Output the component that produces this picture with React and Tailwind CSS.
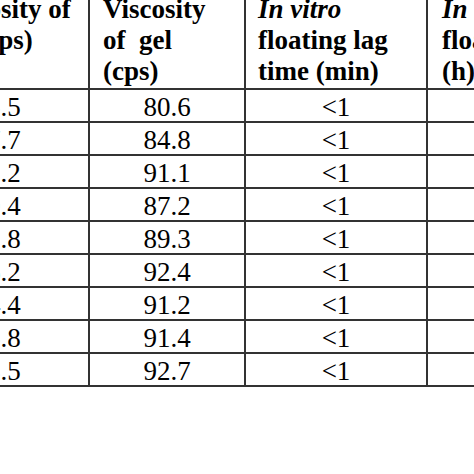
import React from "react";

const ROWS = [
  ["45.5", "80.6", "<1", "> 12"],
  ["47.7", "84.8", "<1", "> 12"],
  ["52.2", "91.1", "<1", "> 12"],
  ["50.4", "87.2", "<1", "> 12"],
  ["51.8", "89.3", "<1", "> 12"],
  ["56.2", "92.4", "<1", "> 12"],
  ["54.4", "91.2", "<1", "> 12"],
  ["55.8", "91.4", "<1", "> 12"],
  ["58.5", "92.7", "<1", "> 12"],
];

// column widths (border-box, incl. 2px right rule)
const COLS = ["w-[178px] pr-[6px]", "w-[156px]", "w-[182px]", "w-[160px]"];

const App = () => {
  return (
    <div className="w-[474px] h-[474px] overflow-hidden bg-white">
      <div
        className="-ml-[88px] -mt-[8px] w-max text-[27px] text-black"
        style={{ fontFamily: '"Liberation Serif", "Times New Roman", serif' }}
      >
        {/* header */}
        <div className="flex border-b-2 border-[#333] font-bold leading-[31px]">
          <div className="w-[178px] border-r-2 border-[#333] pl-[27px] pt-[2px] pb-[1px]">
            Viscosity of
            <br />
            sol (cps)
          </div>
          <div className="w-[156px] border-r-2 border-[#333] pl-[13px] pt-[2px] pb-[1px]">
            Viscosity
            <br />
            of{"\u00a0"} gel
            <br />
            (cps)
          </div>
          <div className="w-[182px] border-r-2 border-[#333] pl-[12px] pt-[2px] pb-[1px]">
            <i>In vitro</i>
            <br />
            floating lag
            <br />
            time (min)
          </div>
          <div className="w-[160px] pl-[14px] pt-[2px] pb-[1px]">
            <i>In{"\u00a0\u00a0"}vitro</i>
            <br />
            floating
            <br />
            (h)
          </div>
        </div>

        {/* body */}
        {ROWS.map((row, i) => (
          <div key={i} className="flex border-b-2 border-[#333] leading-[27px]">
            {row.map((v, j) => (
              <div
                key={j}
                className={`${COLS[j]} ${j < 3 ? "border-r-2 border-[#333]" : ""} pt-[4px] text-center`}
              >
                {v}
              </div>
            ))}
          </div>
        ))}
      </div>
    </div>
  );
};

export default App;
